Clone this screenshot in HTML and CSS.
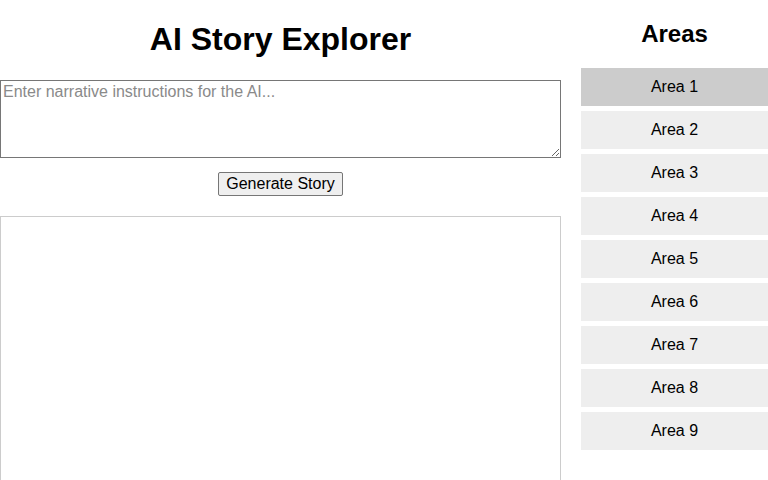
FILE: index.html
```html
<!DOCTYPE html>
<html lang="en">
<head>
<meta charset="utf-8">
<title>AI Story Explorer</title>
<link rel="stylesheet" href="styles.css">
</head>
<body>
<div class="layout">
  <main class="main">
    <h1 class="title">AI Story Explorer</h1>
    <textarea class="prompt" placeholder="Enter narrative instructions for the AI..."></textarea>
    <div class="actions"><button class="generate">Generate Story</button></div>
    <div class="story"></div>
  </main>
  <aside class="sidebar">
    <h2 class="sidebar-title">Areas</h2>
    <div class="area active">Area 1</div>
    <div class="area">Area 2</div>
    <div class="area">Area 3</div>
    <div class="area">Area 4</div>
    <div class="area">Area 5</div>
    <div class="area">Area 6</div>
    <div class="area">Area 7</div>
    <div class="area">Area 8</div>
    <div class="area">Area 9</div>
  </aside>
</div>
</body>
</html>
```

FILE: styles.css
```css
html, body {
  margin: 0;
  padding: 0;
  background: #fff;
  font-family: "Liberation Sans", Arial, sans-serif;
  font-size: 16px;
  color: #000;
}
.layout {
  display: flex;
  gap: 20px;
}
.main {
  flex: 3;
  min-width: 0;
}
.sidebar {
  flex: 1;
  min-width: 0;
}
.title {
  font-size: 32px;
  font-weight: bold;
  text-align: center;
  margin: 21.44px 0;
  line-height: 37px;
}
.prompt {
  display: block;
  width: 100%;
  height: 78px;
  box-sizing: border-box;
  margin: 0;
  padding: 2px;
  border: 1px solid #767676;
  font-family: "Liberation Sans", Arial, sans-serif;
  font-size: 16px;
  resize: vertical;
}
.prompt::placeholder {
  color: #8a8a8a;
}
.actions {
  text-align: center;
  margin-top: 14px;
  height: 24px;
}
.generate {
  font-family: "Liberation Sans", Arial, sans-serif;
  font-size: 16px;
  height: 24px;
  padding: 1px 7px;
  border: 1px solid #767676;
  border-radius: 2px;
  background: #efefef;
  color: #000;
  vertical-align: top;
}
.story {
  margin-top: 20px;
  border: 1px solid #ccc;
  height: 263px;
}
.sidebar-title {
  font-size: 24px;
  font-weight: bold;
  text-align: center;
  margin: 20px 0 21px;
  line-height: 27px;
}
.area {
  background: #eee;
  text-align: center;
  height: 38px;
  line-height: 38px;
  margin-bottom: 5px;
}
.area.active {
  background: #ccc;
}
```
